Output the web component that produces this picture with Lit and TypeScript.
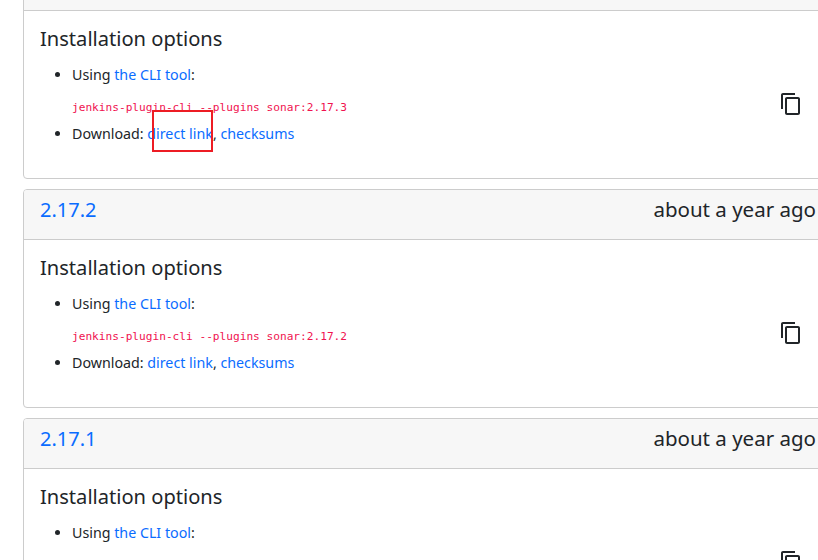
import { LitElement, html, css } from "lit";
import { customElement } from "lit/decorators.js";

const copyPath =
  "M16 1H4c-1.1 0-2 .9-2 2v14h2V3h12V1zm3 4H8c-1.1 0-2 .9-2 2v14c0 1.1.9 2 2 2h11c1.1 0 2-.9 2-2V7c0-1.1-.9-2-2-2zm0 16H8V7h11v14z";

const releases = [
  { version: "2.17.3" },
  { version: "2.17.2" },
  { version: "2.17.1" },
];

@customElement("app-root")
export class AppRoot extends LitElement {
  static styles = css`
    :host {
      display: block;
      position: relative;
      width: 818px;
      height: 560px;
      overflow: hidden;
      background: #fff;
      font-family: "Noto Sans", "Open Sans", sans-serif;
      color: #212529;
    }
    .list {
      display: flex;
      flex-direction: column;
      gap: 10px;
      width: 813px;
      margin: -40px 0 0 23px;
    }
    .card {
      border: 1px solid #ccc;
      border-radius: 4px;
      background: #fff;
      flex: none;
    }
    .head {
      height: 50px;
      box-sizing: border-box;
      display: flex;
      justify-content: space-between;
      align-items: center;
      padding: 0 19px 10px 16px;
      background: #f7f7f7;
      border-bottom: 1px solid #ccc;
      border-radius: 3px 3px 0 0;
      font-size: 20px;
    }
    .age {
      font-size: 20.5px;
      padding-bottom: 2px;
    }
    .body {
      height: 167px;
      box-sizing: border-box;
      display: flex;
      padding: 13px 32px 0 16px;
    }
    .main {
      flex: 1;
    }
    h4 {
      margin: 0 0 9px;
      font-size: 20.1px;
      line-height: 30px;
      font-weight: 400;
    }
    ul {
      margin: 0;
      padding: 0 0 0 32px;
      font-size: 14.25px;
      line-height: 24px;
    }
    a {
      color: #0a6cff;
      text-decoration: none;
    }
    code {
      display: block;
      margin: 13px 0 6px;
      font-family: "DejaVu Sans Mono", monospace;
      font-size: 11.15px;
      line-height: 16px;
      color: #f0124f;
    }
    .copy {
      width: 24px;
      height: 24px;
      margin-top: 68px;
      fill: #212529;
      flex: none;
    }
    .mark {
      position: absolute;
      left: 152px;
      top: 110px;
      width: 61px;
      height: 42px;
      box-sizing: border-box;
      border: 2px solid #ed1c24;
    }
  `;

  render() {
    return html`
      <div class="list">
        ${releases.map(
          (r) => html`
            <section class="card">
              <div class="head">
                <a href="#">${r.version}</a>
                <span class="age">about a year ago</span>
              </div>
              <div class="body">
                <div class="main">
                  <h4>Installation options</h4>
                  <ul>
                    <li>Using <a href="#">the CLI tool</a>:</li>
                    <code>jenkins-plugin-cli --plugins sonar:${r.version}</code>
                    <li>Download: <a href="#">direct link</a>, <a href="#">checksums</a></li>
                  </ul>
                </div>
                <svg class="copy" viewBox="0 0 24 24"><path d=${copyPath}></path></svg>
              </div>
            </section>
          `
        )}
      </div>
      <div class="mark"></div>
    `;
  }
}
